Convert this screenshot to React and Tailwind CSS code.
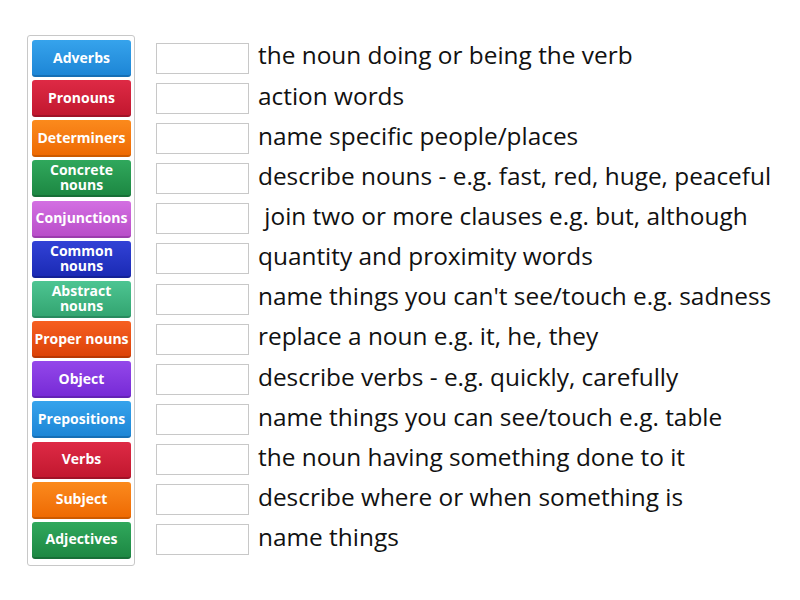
import React from 'react';

const tiles = [
  { label: 'Adverbs', cls: 'from-[#36a3ec] to-[#1d86d6] border-b-[#166fb5]' },
  { label: 'Pronouns', cls: 'from-[#de2a45] to-[#c2172f] border-b-[#a01227]' },
  { label: 'Determiners', cls: 'from-[#fb8a1c] to-[#ee6a02] border-b-[#cc5a00]' },
  { label: 'Concrete nouns', cls: 'from-[#30a85c] to-[#1d8843] border-b-[#176f37]' },
  { label: 'Conjunctions', cls: 'from-[#d36fe2] to-[#b94dc9] border-b-[#9c3cad]' },
  { label: 'Common nouns', cls: 'from-[#3242d6] to-[#1b2ab5] border-b-[#142196]' },
  { label: 'Abstract nouns', cls: 'from-[#4dc592] to-[#33a571] border-b-[#288a5e]' },
  { label: 'Proper nouns', cls: 'from-[#f65f20] to-[#dc4207] border-b-[#b83704]' },
  { label: 'Object', cls: 'from-[#9447ea] to-[#772ad6] border-b-[#6322b5]' },
  { label: 'Prepositions', cls: 'from-[#36a3ec] to-[#1d86d6] border-b-[#166fb5]' },
  { label: 'Verbs', cls: 'from-[#de2a45] to-[#c2172f] border-b-[#a01227]' },
  { label: 'Subject', cls: 'from-[#fb8a1c] to-[#ee6a02] border-b-[#cc5a00]' },
  { label: 'Adjectives', cls: 'from-[#30a85c] to-[#1d8843] border-b-[#176f37]' },
];

const definitions = [
  'the noun doing or being the verb',
  'action words',
  'name specific people/places',
  'describe nouns - e.g. fast, red, huge, peaceful',
  ' join two or more clauses e.g. but, although',
  'quantity and proximity words',
  "name things you can't see/touch e.g. sadness",
  'replace a noun e.g. it, he, they',
  'describe verbs - e.g. quickly, carefully',
  'name things you can see/touch e.g. table',
  'the noun having something done to it',
  'describe where or when something is',
  'name things',
];

export default function App() {
  return (
    <div className="w-[800px] h-[600px] bg-white flex pl-[27px] pt-[35px] font-['Open_Sans',sans-serif]">
      <div className="w-[108px] h-[531px] border border-[#c8c8c8] rounded-[3px] px-[4px] pt-[4px] flex flex-col gap-[3.17px]">
        {tiles.map((t, i) => (
          <div
            key={i}
            className={`h-[37px] w-[99px] rounded-[3px] bg-gradient-to-b border-b-2 ${t.cls} flex items-center justify-center text-center text-white font-bold text-[14px] leading-[15px] px-[1px] -mb-[0px]`}
          >
            <span className="-mt-[1px]">{t.label}</span>
          </div>
        ))}
      </div>
      <div className="ml-[21px] pt-[3px] flex flex-col">
        {definitions.map((d, i) => (
          <div key={i} className="h-[40.17px] flex items-center">
            <div className="w-[93px] h-[31px] border border-[#c8c8c8] bg-white shrink-0" />
            <span className="ml-[9px] text-[24.4px] text-[#111] whitespace-pre leading-none -mt-[5px]">{d}</span>
          </div>
        ))}
      </div>
    </div>
  );
}
